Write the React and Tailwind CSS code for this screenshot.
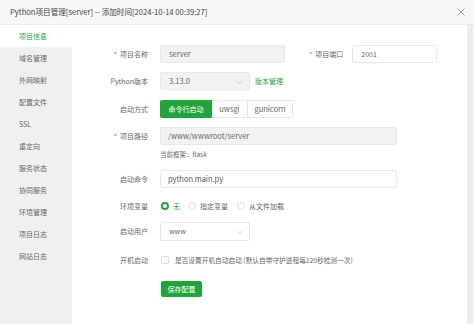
import React from "react";

const F = { fontFamily: '"Noto Sans CJK SC", "Noto Sans", sans-serif' };

function Chevron() {
  return (
    <svg width="7" height="5" viewBox="0 0 7 5" className="absolute right-[6px] top-[7px]">
      <path d="M0.8 1 L3.5 3.7 L6.2 1" fill="none" stroke="#c8c8c8" strokeWidth="0.8" />
    </svg>
  );
}

function Label({ children, star }) {
  return (
    <div className="w-[76px] shrink-0 text-right text-[7px] text-[#666] flex items-center justify-end">
      {star && <span className="text-[#ef4444] mr-[3px]">*</span>}
      {children}
    </div>
  );
}

export default function App() {
  const side = ["项目信息", "域名管理", "外网映射", "配置文件", "SSL", "重定向", "服务状态", "协同服务", "环境管理", "项目日志", "网站日志"];
  return (
    <div style={F} className="w-[474px] h-[324px] bg-white overflow-hidden flex flex-col">
      <div className="h-[25px] shrink-0 bg-[#f7f7f7] border-b border-[#ebebeb] flex items-center justify-between pl-[10px] pr-[9px]">
        <span className="text-[7.6px] text-[#444]">Python项目管理[server] -- 添加时间[2024-10-14 00:39:27]</span>
        <svg width="8" height="8" viewBox="0 0 8 8">
          <path d="M0.5 0.5 L7.5 7.5 M7.5 0.5 L0.5 7.5" stroke="#888" strokeWidth="0.8" />
        </svg>
      </div>
      <div className="flex flex-1 min-h-0">
        <div className="w-[72px] shrink-0 bg-[#f0f0f0] flex flex-col">
          {side.map((s, i) => (
            <div key={s} className={`h-[22px] flex items-center pl-[19px] text-[7px] ${i === 0 ? "bg-white text-[#20a53a]" : "text-[#666]"}`}>
              {s}
            </div>
          ))}
        </div>
        <div className="flex-1 flex flex-col pt-[20px] text-[7px] text-[#666]">
          <div className="flex h-[18px]">
            <Label star>项目名称</Label>
            <div className="ml-[12px] w-[125px] h-full bg-[#f2f2f2] border border-[#e8e8e8] rounded-[2px] flex items-center pl-[8px] text-[7.5px] text-[#666]">server</div>
            <div className="ml-[24px] flex items-center text-[7px]"><span className="text-[#ef4444] mr-[3px]">*</span>项目端口</div>
            <div className="ml-[9px] w-[85px] h-full bg-white border border-[#e8e8e8] rounded-[2px] flex items-center pl-[8px] text-[7px] text-[#666]">2001</div>
          </div>
          <div className="flex h-[18px] mt-[9px]">
            <Label>Python版本</Label>
            <div className="ml-[12px] w-[90px] h-full bg-[#f2f2f2] border border-[#e8e8e8] rounded-[2px] flex items-center pl-[8px] text-[7.5px] text-[#666] relative">3.13.0<Chevron /></div>
            <div className="ml-[5px] flex items-center text-[#20a53a]">版本管理</div>
          </div>
          <div className="flex h-[18px] mt-[10px]">
            <Label>启动方式</Label>
            <div className="ml-[12px] flex h-full">
              <div className="w-[52px] bg-[#20a53a] text-white flex items-center justify-center rounded-l-[2px]">命令行启动</div>
              <div className="w-[36px] border border-[#e6e6e6] border-l-0 flex items-center justify-center text-[7.5px]">uwsgi</div>
              <div className="w-[45px] border border-[#e6e6e6] border-l-0 flex items-center justify-center text-[7.5px] rounded-r-[2px]">gunicorn</div>
            </div>
          </div>
          <div className="flex h-[18px] mt-[9px]">
            <Label star>项目路径</Label>
            <div className="ml-[12px] w-[237px] h-full bg-[#f2f2f2] border border-[#e8e8e8] rounded-[2px] flex items-center pl-[7px] text-[7.5px] text-[#666]">/www/wwwroot/server</div>
          </div>
          <div className="flex h-[10px] mt-[5px]">
            <div className="w-[76px]" />
            <div className="ml-[12px] flex items-center text-[6.5px] text-[#666]">当前框架：flask</div>
          </div>
          <div className="flex h-[18px] mt-[10px]">
            <Label>启动命令</Label>
            <div className="ml-[12px] w-[237px] h-full bg-white border border-[#e8e8e8] rounded-[2px] flex items-center pl-[7px] text-[7.5px] text-[#555]">python main.py</div>
          </div>
          <div className="flex h-[18px] mt-[9px]">
            <Label>环境变量</Label>
            <div className="ml-[13px] flex items-center">
              <span className="w-[8px] h-[8px] rounded-full border-[2.5px] border-[#20a53a] bg-white" />
              <span className="ml-[4px] text-[#20a53a]">无</span>
              <span className="ml-[8px] w-[8px] h-[8px] rounded-full border border-[#dcdcdc] bg-white" />
              <span className="ml-[4px]">指定变量</span>
              <span className="ml-[9px] w-[8px] h-[8px] rounded-full border border-[#dcdcdc] bg-white" />
              <span className="ml-[4px]">从文件加载</span>
            </div>
          </div>
          <div className="flex h-[19px] mt-[7px]">
            <Label>启动用户</Label>
            <div className="ml-[12px] w-[90px] h-full bg-white border border-[#e8e8e8] rounded-[2px] flex items-center pl-[8px] text-[7px] text-[#666] relative">www<Chevron /></div>
          </div>
          <div className="flex h-[18px] mt-[10px]">
            <Label>开机启动</Label>
            <div className="ml-[13px] flex items-center">
              <span className="w-[8px] h-[8px] border border-[#dcdcdc] rounded-[1px] bg-white" />
              <span className="ml-[6px] text-[6.7px]">是否设置开机自动启动 (默认自带守护进程每120秒检测一次)</span>
            </div>
          </div>
          <div className="flex h-[16px] mt-[12px]">
            <div className="w-[76px]" />
            <div className="ml-[13px] w-[41px] h-full bg-[#20a53a] rounded-[2px] text-white flex items-center justify-center">保存配置</div>
          </div>
        </div>
        <div className="w-[7px] shrink-0 flex">
          <div className="w-[6px] bg-[#ececec]" />
        </div>
      </div>
    </div>
  );
}
